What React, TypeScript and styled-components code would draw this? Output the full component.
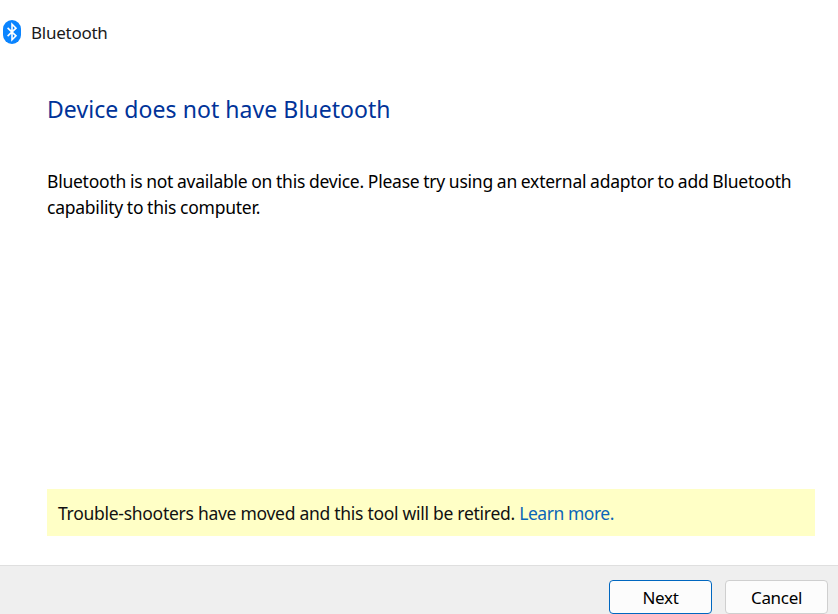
import React from "react";
import styled, { createGlobalStyle } from "styled-components";

const Global = createGlobalStyle`
  html, body { margin: 0; padding: 0; background: #fff; }
  #root { height: 614px; }
`;

const Page = styled.div`
  width: 838px;
  height: 614px;
  display: flex;
  flex-direction: column;
  overflow: hidden;
  font-family: "Noto Sans", "Open Sans", sans-serif;
  color: #000;
`;

const TitleBar = styled.header`
  height: 36px;
  padding: 14px 0 0 3px;
  display: flex;
  align-items: center;
  gap: 10px;
  font-size: 17px;
  letter-spacing: -0.25px;
  color: #1a1a1a;
`;

const Content = styled.main`
  flex: 1;
  display: flex;
  flex-direction: column;
  padding: 2px 23px 29px 47px;
`;

const Heading = styled.h1`
  margin: 41px 0 0;
  font-size: 23px;
  line-height: 32px;
  font-weight: 400;
  color: #003399;
  letter-spacing: 0.06px;
`;

const Body = styled.p`
  margin: 43px 0 0;
  font-size: 17.5px;
  line-height: 26px;
  letter-spacing: -0.24px;
  word-spacing: -0.45px;
  width: 770px;
  flex: 1;
`;

const Banner = styled.div`
  height: 47px;
  padding-left: 11px;
  display: flex;
  align-items: center;
  background: #ffffc6;
  font-size: 17.5px;
  letter-spacing: -0.28px;
  color: #111;
  white-space: pre;
`;

const Learn = styled.a`
  color: #0a66b8;
  text-decoration: none;
  letter-spacing: -0.46px;
`;

const Footer = styled.footer`
  height: 49px;
  box-sizing: border-box;
  border-top: 1px solid #dfdfdf;
  background: #efefef;
  display: flex;
  justify-content: flex-end;
  gap: 13px;
  padding: 14px 10px 0 0;
`;

const Button = styled.button<{ $primary?: boolean }>`
  width: 103px;
  height: 34px;
  box-sizing: border-box;
  border-radius: 4px;
  border: 1px solid ${(p) => (p.$primary ? "#0067c0" : "#cfcfcf")};
  background: #fcfcfc;
  font-family: inherit;
  font-size: 17px;
  letter-spacing: -0.3px;
  color: #000;
  padding: 0;
`;

const BluetoothIcon = () => (
  <svg width="18" height="24" viewBox="0 0 18 24" aria-hidden="true">
    <rect x="0" y="0" width="18" height="24" rx="9" fill="#0a84ff" />
    <path d="M4.6 7.8 L13 15.8 L9 19.8 V4.2 L13 8.2 L4.6 16.2" fill="none" stroke="#fff" strokeWidth="1.6" strokeLinejoin="miter" />
  </svg>
);

export default function App() {
  return (
    <Page>
      <Global />
      <TitleBar>
        <BluetoothIcon />
        <span>Bluetooth</span>
      </TitleBar>
      <Content>
        <Heading>Device does not have Bluetooth</Heading>
        <Body>
          Bluetooth is not available on this device. Please try using an external adaptor to add Bluetooth capability to this computer.
        </Body>
        <Banner>
          <span>Trouble-shooters have moved and this tool will be retired. </span>
          <Learn href="#">Learn more.</Learn>
        </Banner>
      </Content>
      <Footer>
        <Button $primary>Next</Button>
        <Button>Cancel</Button>
      </Footer>
    </Page>
  );
}
